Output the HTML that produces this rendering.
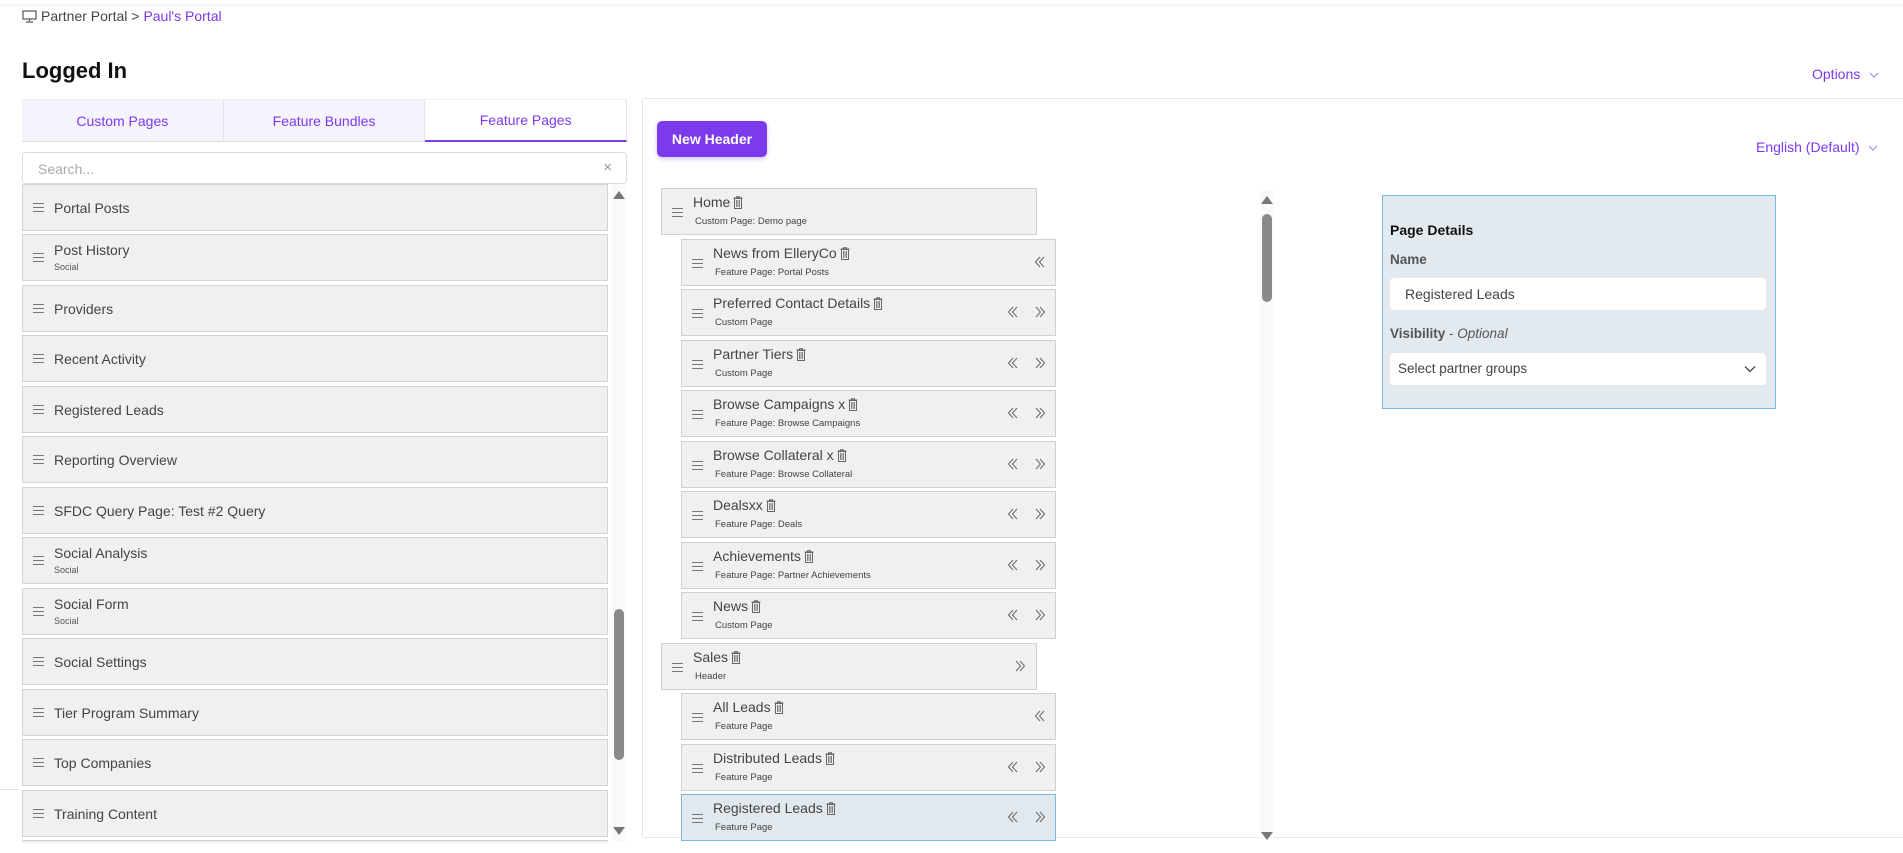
<!DOCTYPE html>
<html><head><meta charset="utf-8"><style>
*{box-sizing:border-box;margin:0;padding:0}
html,body{width:1903px;height:853px;overflow:hidden}
body{background:#fff;font-family:"Liberation Sans",sans-serif;color:#333;position:relative}
.a{position:absolute}
.topbar{left:0;top:0;width:1903px;height:4px;box-shadow:0 1px 4px rgba(0,0,0,.08)}
.crumb{left:22px;top:8px;font-size:14px;color:#444;display:flex;align-items:center;gap:4px}
.crumb span.p{color:#7c3aed}
h1{position:absolute;left:22px;top:58px;font-size:22px;font-weight:bold;color:#111}
.purple{color:#7c3aed}
.tabs{left:22px;top:99px;width:605px;height:43px;display:flex;border-top:1px solid #eee}
.tab{flex:1;background:#f5f3fb;color:#7c3aed;font-size:14px;display:flex;align-items:center;justify-content:center;border-right:1px solid #e4e4ec;border-bottom:1px solid #ddd}
.tab.on{background:#fff;border-bottom:2px solid #7c3aed}
.search{left:22px;top:152px;width:605px;height:32px;border:1px solid #ddd;border-radius:4px;font-size:14px;color:#aaa;padding:8px 15px}
.li{left:22px;width:586px;height:47px;background:#f0f0f0;border:1px solid #d3d3d3;font-size:14px;color:#444}
.li .t{position:absolute;left:31px;top:15px}
.li .t2{position:absolute;left:31px;top:7px}
.li .s{position:absolute;left:31px;top:27px;font-size:9px;color:#555}
.hb{position:absolute;left:10px;top:18px;width:11px;height:9px;border-top:1.5px solid #777;border-bottom:1.5px solid #777}
.hb:after{content:"";position:absolute;left:0;right:0;top:2.5px;border-top:1.5px solid #777}
.sb{width:14px;background:#fafafa}
.thumb{background:#8a8a8a;border-radius:6px}
.tri-up{width:0;height:0;border-left:6px solid transparent;border-right:6px solid transparent;border-bottom:8px solid #777}
.tri-dn{width:0;height:0;border-left:6px solid transparent;border-right:6px solid transparent;border-top:8px solid #777}
.ti{height:47px;background:#f0f0f0;border:1px solid #d0d0d0;font-size:14px;color:#444}
.ti .t{position:absolute;left:31px;top:5px;display:flex;align-items:center;gap:3px}
.ti .s{position:absolute;left:33px;top:27px;font-size:9.5px;color:#444}
.ti .hb{top:19px}
.ar{position:absolute;top:16px}
</style></head><body>
<div class="a topbar"></div>
<div class="a crumb"><svg width="15" height="13" viewBox="0 0 15 13"><rect x="1" y="1" width="13" height="8" fill="none" stroke="#555" stroke-width="1.2"/><path d="M7.5 9v2M4 12h7" stroke="#555" stroke-width="1.2"/></svg>Partner Portal &gt; <span class="p">Paul's Portal</span></div>
<h1>Logged In</h1>
<div class="a purple" style="left:1812px;top:66px;font-size:14px">Options <svg width="12" height="8" viewBox="0 0 12 8" style="margin-left:4px"><path d="M2 2l4 4 4-4" fill="none" stroke="#a78bfa" stroke-width="1.2"/></svg></div>
<div class="a" style="left:642px;top:98px;width:1261px;border-top:1px solid #e8e8e8"></div>
<div class="a tabs"><div class="tab">Custom Pages</div><div class="tab">Feature Bundles</div><div class="tab on">Feature Pages</div></div>
<div class="a search">Search...<span style="position:absolute;right:14px;top:6px;color:#999;font-size:15px">×</span></div>

<div class="a li" style="top:184px"><i class="hb"></i><span class="t">Portal Posts</span></div>
<div class="a li" style="top:234px"><i class="hb"></i><span class="t2">Post History</span><span class="s">Social</span></div>
<div class="a li" style="top:285px"><i class="hb"></i><span class="t">Providers</span></div>
<div class="a li" style="top:335px"><i class="hb"></i><span class="t">Recent Activity</span></div>
<div class="a li" style="top:386px"><i class="hb"></i><span class="t">Registered Leads</span></div>
<div class="a li" style="top:436px"><i class="hb"></i><span class="t">Reporting Overview</span></div>
<div class="a li" style="top:487px"><i class="hb"></i><span class="t">SFDC Query Page: Test #2 Query</span></div>
<div class="a li" style="top:537px"><i class="hb"></i><span class="t2">Social Analysis</span><span class="s">Social</span></div>
<div class="a li" style="top:588px"><i class="hb"></i><span class="t2">Social Form</span><span class="s">Social</span></div>
<div class="a li" style="top:638px"><i class="hb"></i><span class="t">Social Settings</span></div>
<div class="a li" style="top:689px"><i class="hb"></i><span class="t">Tier Program Summary</span></div>
<div class="a li" style="top:739px"><i class="hb"></i><span class="t">Top Companies</span></div>
<div class="a li" style="top:790px"><i class="hb"></i><span class="t">Training Content</span></div>
<div class="a" style="left:22px;top:840px;width:586px;height:3px;background:#f0f0f0;border-top:1px solid #d3d3d3"></div>
<div class="a sb" style="left:612px;top:184px;height:658px"></div>
<div class="a tri-up" style="left:613px;top:191px"></div>
<div class="a thumb" style="left:614px;top:609px;width:10px;height:151px"></div>
<div class="a tri-dn" style="left:613px;top:827px"></div>
<div class="a" style="left:0;top:789px;width:18px;border-top:1px solid #ddd"></div>

<div class="a" style="left:642px;top:98px;width:1px;height:740px;background:#e8e8e8"></div>
<div class="a" style="left:642px;top:837px;width:1261px;height:1px;background:#e8e8e8"></div>
<div class="a" style="left:657px;top:121px;width:110px;height:36px;background:#7c3aed;border-radius:5px;color:#fff;font-weight:bold;font-size:14px;display:flex;align-items:center;justify-content:center;box-shadow:0 2px 4px rgba(124,58,237,.3)">New Header</div>
<div class="a purple" style="left:1756px;top:139px;font-size:14px">English (Default) <svg width="12" height="8" viewBox="0 0 12 8" style="margin-left:4px"><path d="M2 2l4 4 4-4" fill="none" stroke="#a78bfa" stroke-width="1.2"/></svg></div>

<svg width="0" height="0" style="position:absolute"><defs>
<symbol id="l" viewBox="0 0 12 12"><path d="M6 1L1.5 6 6 11M10 1L5.5 6 10 11" fill="none" stroke="#666" stroke-width="1"/></symbol>
<symbol id="r" viewBox="0 0 12 12"><path d="M2 1l4.5 5L2 11M6 1l4.5 5L6 11" fill="none" stroke="#666" stroke-width="1"/></symbol>
<symbol id="bin" viewBox="0 0 10 13"><path d="M0.5 2h9M3.5 2V0.8h3V2M1.5 2.5h7v10h-7z" fill="none" stroke="#666" stroke-width="1"/><path d="M3.5 4v7M5 4v7M6.5 4v7" stroke="#666" stroke-width=".8"/></symbol>
</defs></svg>

<div class="a ti" style="left:661px;top:188px;width:376px"><i class="hb"></i><span class="t">Home <svg width="10" height="13"><use href="#bin"/></svg></span><span class="s">Custom Page: Demo page</span></div>
<div class="a ti" style="left:681px;top:239px;width:375px"><i class="hb"></i><span class="t">News from ElleryCo <svg width="10" height="13"><use href="#bin"/></svg></span><span class="s">Feature Page: Portal Posts</span><svg class="ar" style="left:352px" width="12" height="12"><use href="#l"/></svg></div>
<div class="a ti" style="left:681px;top:289px;width:375px"><i class="hb"></i><span class="t">Preferred Contact Details <svg width="10" height="13"><use href="#bin"/></svg></span><span class="s">Custom Page</span><svg class="ar" style="left:325px" width="12" height="12"><use href="#l"/></svg><svg class="ar" style="left:352px" width="12" height="12"><use href="#r"/></svg></div>
<div class="a ti" style="left:681px;top:340px;width:375px"><i class="hb"></i><span class="t">Partner Tiers <svg width="10" height="13"><use href="#bin"/></svg></span><span class="s">Custom Page</span><svg class="ar" style="left:325px" width="12" height="12"><use href="#l"/></svg><svg class="ar" style="left:352px" width="12" height="12"><use href="#r"/></svg></div>
<div class="a ti" style="left:681px;top:390px;width:375px"><i class="hb"></i><span class="t">Browse Campaigns x <svg width="10" height="13"><use href="#bin"/></svg></span><span class="s">Feature Page: Browse Campaigns</span><svg class="ar" style="left:325px" width="12" height="12"><use href="#l"/></svg><svg class="ar" style="left:352px" width="12" height="12"><use href="#r"/></svg></div>
<div class="a ti" style="left:681px;top:441px;width:375px"><i class="hb"></i><span class="t">Browse Collateral x <svg width="10" height="13"><use href="#bin"/></svg></span><span class="s">Feature Page: Browse Collateral</span><svg class="ar" style="left:325px" width="12" height="12"><use href="#l"/></svg><svg class="ar" style="left:352px" width="12" height="12"><use href="#r"/></svg></div>
<div class="a ti" style="left:681px;top:491px;width:375px"><i class="hb"></i><span class="t">Dealsxx <svg width="10" height="13"><use href="#bin"/></svg></span><span class="s">Feature Page: Deals</span><svg class="ar" style="left:325px" width="12" height="12"><use href="#l"/></svg><svg class="ar" style="left:352px" width="12" height="12"><use href="#r"/></svg></div>
<div class="a ti" style="left:681px;top:542px;width:375px"><i class="hb"></i><span class="t">Achievements <svg width="10" height="13"><use href="#bin"/></svg></span><span class="s">Feature Page: Partner Achievements</span><svg class="ar" style="left:325px" width="12" height="12"><use href="#l"/></svg><svg class="ar" style="left:352px" width="12" height="12"><use href="#r"/></svg></div>
<div class="a ti" style="left:681px;top:592px;width:375px"><i class="hb"></i><span class="t">News <svg width="10" height="13"><use href="#bin"/></svg></span><span class="s">Custom Page</span><svg class="ar" style="left:325px" width="12" height="12"><use href="#l"/></svg><svg class="ar" style="left:352px" width="12" height="12"><use href="#r"/></svg></div>
<div class="a ti" style="left:661px;top:643px;width:376px"><i class="hb"></i><span class="t">Sales <svg width="10" height="13"><use href="#bin"/></svg></span><span class="s">Header</span><svg class="ar" style="left:352px" width="12" height="12"><use href="#r"/></svg></div>
<div class="a ti" style="left:681px;top:693px;width:375px"><i class="hb"></i><span class="t">All Leads <svg width="10" height="13"><use href="#bin"/></svg></span><span class="s">Feature Page</span><svg class="ar" style="left:352px" width="12" height="12"><use href="#l"/></svg></div>
<div class="a ti" style="left:681px;top:744px;width:375px"><i class="hb"></i><span class="t">Distributed Leads <svg width="10" height="13"><use href="#bin"/></svg></span><span class="s">Feature Page</span><svg class="ar" style="left:325px" width="12" height="12"><use href="#l"/></svg><svg class="ar" style="left:352px" width="12" height="12"><use href="#r"/></svg></div>
<div class="a ti" style="left:681px;top:794px;width:375px;background:#e1e9ef;border-color:#7ab8e0"><i class="hb"></i><span class="t">Registered Leads <svg width="10" height="13"><use href="#bin"/></svg></span><span class="s">Feature Page</span><svg class="ar" style="left:325px" width="12" height="12"><use href="#l"/></svg><svg class="ar" style="left:352px" width="12" height="12"><use href="#r"/></svg></div>

<div class="a sb" style="left:1260px;top:190px;height:648px"></div>
<div class="a tri-up" style="left:1261px;top:196px"></div>
<div class="a thumb" style="left:1262px;top:214px;width:10px;height:88px"></div>
<div class="a tri-dn" style="left:1261px;top:832px"></div>

<div class="a" style="left:1382px;top:195px;width:394px;height:214px;background:#e2e9ef;border:1px solid #7ab8e8">
 <div class="a" style="left:7px;top:26px;font-size:14px;font-weight:bold;color:#111">Page Details</div>
 <div class="a" style="left:7px;top:56px;font-size:13.5px;font-weight:bold;color:#555">Name</div>
 <div class="a" style="left:7px;top:82px;width:376px;height:32px;background:#fff;border-radius:4px;font-size:14px;color:#444;padding:8px 15px">Registered Leads</div>
 <div class="a" style="left:7px;top:130px;font-size:13.5px;color:#555"><b>Visibility</b> - <i>Optional</i></div>
 <div class="a" style="left:7px;top:157px;width:376px;height:32px;background:#fff;border-radius:4px;font-size:13.5px;color:#444;padding:8px 8px">Select partner groups<svg style="position:absolute;right:10px;top:12px" width="12" height="8" viewBox="0 0 12 8"><path d="M1 1.5l5 5 5-5" fill="none" stroke="#444" stroke-width="1.3"/></svg></div>
</div>
</body></html>
